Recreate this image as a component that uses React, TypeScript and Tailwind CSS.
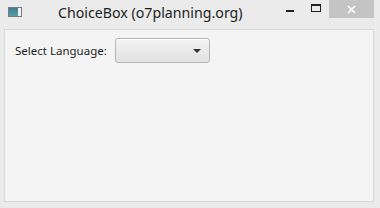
export default function App() {
  return (
    <div
      className="relative h-[208px] w-[380px] overflow-hidden bg-[#ebebeb] text-[#1e1e1e]"
      style={{ fontFamily: '"Segoe UI", "Noto Sans", "Open Sans", sans-serif' }}
    >
      {/* title bar */}
      <div className="flex h-[29px] items-start">
        <div className="ml-[8px] mt-[7px] flex h-[10px] w-[14px] border border-[#6b7f86] bg-[#f4f4f4]">
          <div className="h-full w-[9px] bg-gradient-to-b from-[#3f7e8f] to-[#5c9ca8]" />
        </div>
        <div className="ml-[36px] mt-[3px] text-[14.2px] leading-[20px]">
          ChoiceBox (o7planning.org)
        </div>
        <div className="ml-auto flex h-[18px] items-start">
          <div className="flex h-[18px] w-[26px] items-center justify-center">
            <div className="mt-[3px] h-[2px] w-[8px] bg-[#222]" />
          </div>
          <div className="flex h-[18px] w-[26px] items-start justify-center pt-[4px]">
            <div className="h-[8px] w-[10px] border border-t-2 border-[#222]" />
          </div>
          <div className="mr-[6px] flex h-[18px] w-[45px] items-center justify-center bg-[#c4c4c4]">
            <svg width="9" height="9" viewBox="0 0 9 9">
              <path d="M1 1L8 8M8 1L1 8" stroke="#fff" strokeWidth="1.6" />
            </svg>
          </div>
        </div>
      </div>

      {/* content */}
      <div className="mx-[4px] h-[173px] w-[370px] border border-[#d9d9d9] bg-[#f4f4f4]">
        <div className="flex items-center gap-[8px] pl-[10px] pt-[8px]">
          <span className="text-[11.5px] leading-[16px]">Select Language:</span>
          <div className="flex h-[25px] w-[95px] items-center justify-end rounded-[3px] border border-[#b5b5b5] bg-gradient-to-b from-[#f4f4f4] to-[#e2e2e2] pr-[8px] shadow-[inset_0_1px_0_#fff]">
            <svg width="8" height="4" viewBox="0 0 8 4">
              <path d="M0 0H8L4 4Z" fill="#333" />
            </svg>
          </div>
        </div>
      </div>
    </div>
  );
}
